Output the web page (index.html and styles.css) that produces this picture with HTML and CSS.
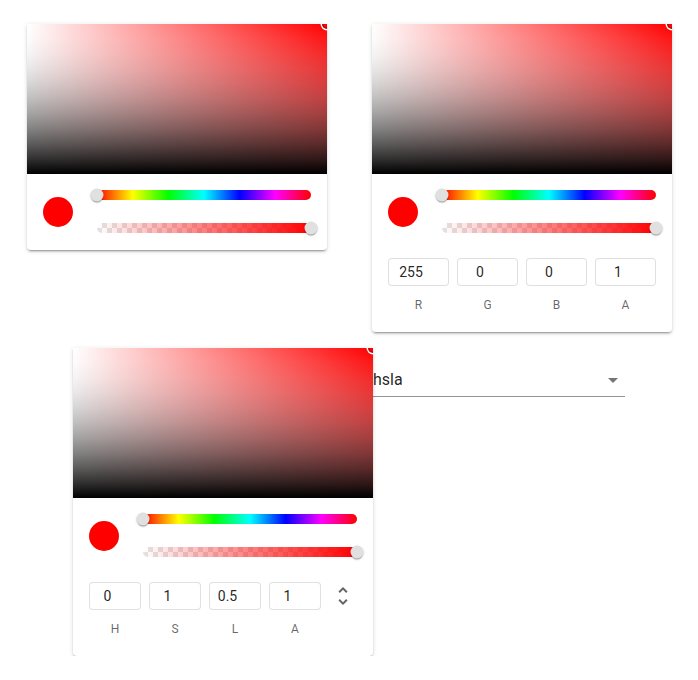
FILE: index.html
```html
<!DOCTYPE html>
<html lang="en">
<head>
<meta charset="utf-8">
<title>Color pickers</title>
<link rel="stylesheet" href="styles.css">
</head>
<body>
<div class="page">
  <div class="row row-top">
    <div class="card">
      <div class="canvas"><span class="canvas-dot"></span></div>
      <div class="preview">
        <div class="preview-dot"></div>
        <div class="sliders">
          <div class="track hue"><span class="thumb thumb-start"></span></div>
          <div class="track alpha"><span class="thumb thumb-end"></span></div>
        </div>
      </div>
    </div>

    <div class="card">
      <div class="canvas"><span class="canvas-dot"></span></div>
      <div class="preview">
        <div class="preview-dot"></div>
        <div class="sliders">
          <div class="track hue"><span class="thumb thumb-start"></span></div>
          <div class="track alpha"><span class="thumb thumb-end"></span></div>
        </div>
      </div>
      <div class="edit">
        <div class="field"><input class="num" type="text" value="255" readonly><span class="label">R</span></div>
        <div class="field"><input class="num" type="text" value="0" readonly><span class="label">G</span></div>
        <div class="field"><input class="num" type="text" value="0" readonly><span class="label">B</span></div>
        <div class="field"><input class="num" type="text" value="1" readonly><span class="label">A</span></div>
      </div>
    </div>
  </div>

  <div class="row row-bottom">
    <div class="card card-front">
      <div class="canvas"><span class="canvas-dot"></span></div>
      <div class="preview">
        <div class="preview-dot"></div>
        <div class="sliders">
          <div class="track hue"><span class="thumb thumb-start"></span></div>
          <div class="track alpha"><span class="thumb thumb-end"></span></div>
        </div>
      </div>
      <div class="edit">
        <div class="field"><input class="num" type="text" value="0" readonly><span class="label">H</span></div>
        <div class="field"><input class="num" type="text" value="1" readonly><span class="label">S</span></div>
        <div class="field"><input class="num" type="text" value="0.5" readonly><span class="label">L</span></div>
        <div class="field"><input class="num" type="text" value="1" readonly><span class="label">A</span></div>
        <button class="mode-btn" type="button" aria-label="Change mode">
          <svg viewBox="0 0 24 24" width="24" height="24"><path d="M12,18.17L8.83,15L7.42,16.41L12,21L16.59,16.41L15.17,15M12,5.83L15.17,9L16.58,7.59L12,3L7.41,7.59L8.83,9L12,5.83Z"/></svg>
        </button>
      </div>
    </div>

    <div class="select">
      <span class="select-value">hsla</span>
      <svg class="select-arrow" viewBox="0 0 24 24" width="24" height="24"><path d="M7,10L12,15L17,10H7Z"/></svg>
    </div>
  </div>
</div>
</body>
</html>
```

FILE: styles.css
```css
* { box-sizing: border-box; }

html, body {
  margin: 0;
  background: #fff;
  font-family: Roboto, "Liberation Sans", Arial, sans-serif;
  color: rgba(0, 0, 0, 0.87);
}

.page {
  padding-top: 24px;
}

.row {
  display: flex;
  align-items: flex-start;
}

.row-top {
  padding-left: 27px;
  gap: 45px;
}

.row-bottom {
  margin-top: 16px;
  justify-content: center;
}

.card {
  width: 300px;
  background: #fff;
  border-radius: 0 0 4px 4px;
  overflow: hidden;
  box-shadow: 0 3px 1px -2px rgba(0, 0, 0, 0.2),
              0 2px 2px 0 rgba(0, 0, 0, 0.14),
              0 1px 5px 0 rgba(0, 0, 0, 0.12);
}

.card-front {
  position: relative;
  z-index: 1;
}

/* value gradient mimics canvas (unpremultiplied) interpolation
   from transparent white to opaque black */
.canvas {
  position: relative;
  height: 150px;
  overflow: hidden;
  background:
    linear-gradient(to bottom,
      rgba(255, 255, 255, 0) 0%,
      rgba(230, 230, 230, 0.1) 10%,
      rgba(204, 204, 204, 0.2) 20%,
      rgba(179, 179, 179, 0.3) 30%,
      rgba(153, 153, 153, 0.4) 40%,
      rgba(128, 128, 128, 0.5) 50%,
      rgba(102, 102, 102, 0.6) 60%,
      rgba(77, 77, 77, 0.7) 70%,
      rgba(51, 51, 51, 0.8) 80%,
      rgba(26, 26, 26, 0.9) 90%,
      rgba(0, 0, 0, 1) 100%),
    linear-gradient(to right, #fff, #f00);
}

.canvas-dot {
  position: absolute;
  right: 0;
  top: 0;
  width: 10px;
  height: 10px;
  border-radius: 50%;
  transform: translate(50%, -50%);
  box-shadow: 0 0 0 1.5px #fff, inset 0 0 1px 1.5px rgba(0, 0, 0, 0.3);
}

.preview {
  display: flex;
  align-items: center;
  padding: 16px 16px 17px;
}

.preview-dot {
  width: 30px;
  height: 30px;
  border-radius: 50%;
  background: #f00;
  margin-right: 24px;
  flex: none;
}

.sliders {
  flex: 1;
  display: flex;
  flex-direction: column;
  gap: 23px;
}

.track {
  position: relative;
  height: 10px;
  border-radius: 5px;
}

.hue {
  background: linear-gradient(to right, #f00 0%, #ff0 16.66%, #0f0 33.33%, #0ff 50%, #00f 66.66%, #f0f 83.33%, #f00 100%);
}

.alpha {
  background: linear-gradient(to right, rgba(255, 0, 0, 0), #f00),
              conic-gradient(#e3e3e3 25%, #fff 0 50%, #e3e3e3 0 75%, #fff 0) 0 0 / 10px 10px;
}

.thumb {
  position: absolute;
  top: 50%;
  width: 13px;
  height: 13px;
  border-radius: 50%;
  background: #e0e0e0;
  transform: translate(-50%, -50%);
  box-shadow: 0 2px 1px -1px rgba(0, 0, 0, 0.2),
              0 1px 1px 0 rgba(0, 0, 0, 0.14),
              0 1px 3px 0 rgba(0, 0, 0, 0.12);
}

.thumb-start { left: 0; }
.thumb-end { left: 100%; }

.edit {
  display: flex;
  align-items: flex-start;
  gap: 8px;
  padding: 8px 16px 17px;
}

.field {
  flex: 1;
  min-width: 0;
  display: flex;
  flex-direction: column;
  align-items: center;
}

.num {
  width: 100%;
  height: 28px;
  margin: 0;
  padding: 0 15px 0 0;
  border: 1px solid rgba(0, 0, 0, 0.12);
  border-radius: 4px;
  background: #fff;
  font-family: Roboto, "Liberation Sans", Arial, sans-serif;
  font-size: 14px;
  color: rgba(0, 0, 0, 0.87);
  text-align: center;
  outline: none;
}

.label {
  margin-top: 9px;
  font-size: 12px;
  line-height: 20px;
  color: rgba(0, 0, 0, 0.6);
}

.mode-btn {
  flex: none;
  width: 28px;
  height: 28px;
  padding: 0;
  border: 0;
  background: transparent;
  display: flex;
  align-items: center;
  justify-content: center;
}

.mode-btn svg {
  fill: rgba(0, 0, 0, 0.6);
}

.select {
  width: 252px;
  margin-top: 22px;
  padding-bottom: 6px;
  display: flex;
  align-items: center;
  justify-content: space-between;
  border-bottom: 1px solid rgba(0, 0, 0, 0.42);
}

.select-value {
  font-size: 16px;
  line-height: 20px;
  color: rgba(0, 0, 0, 0.87);
}

.select-arrow {
  fill: rgba(0, 0, 0, 0.54);
  flex: none;
  margin: -2px 0;
}
```
